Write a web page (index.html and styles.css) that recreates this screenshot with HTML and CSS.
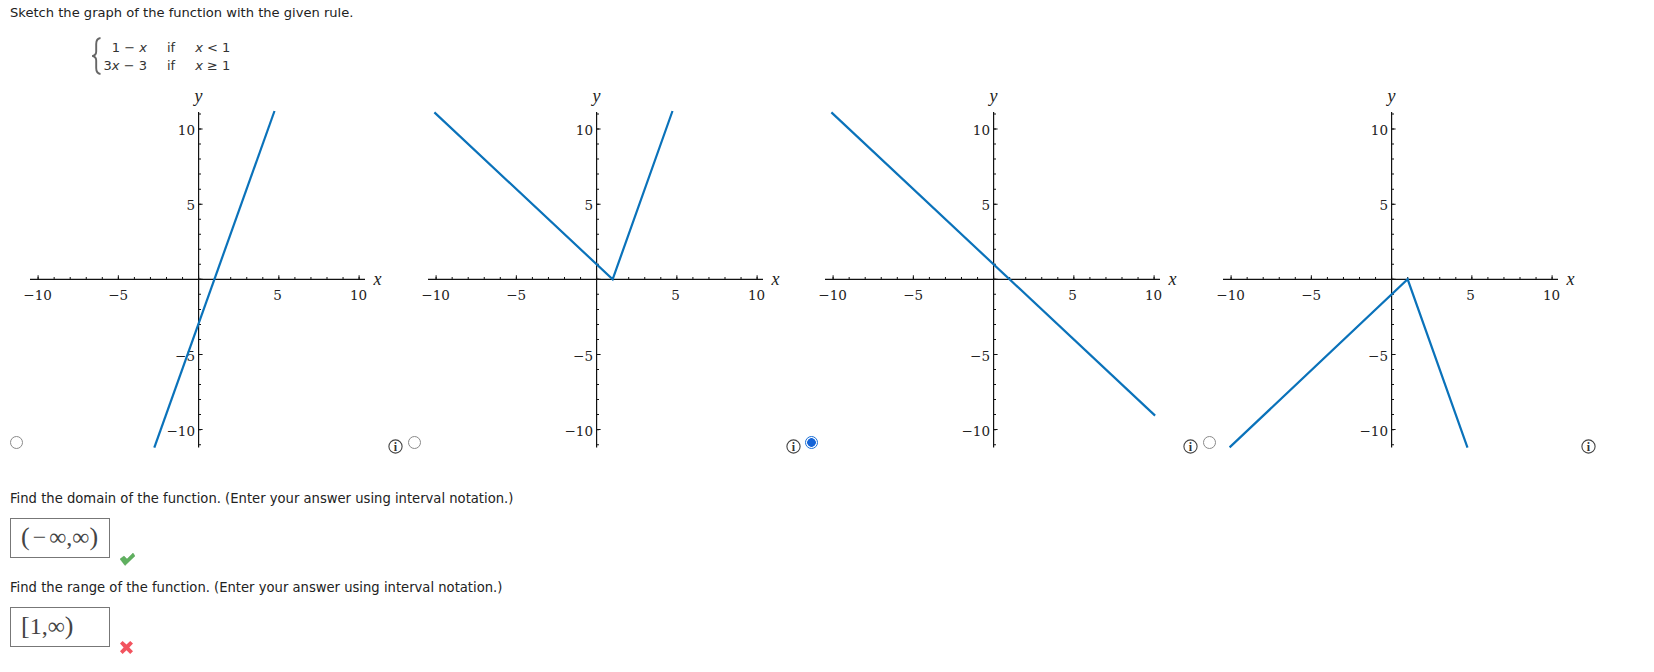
FILE: index.html
```html
<!DOCTYPE html>
<html lang="en">
<head>
<meta charset="utf-8">
<title>Sketch the graph</title>
<link rel="stylesheet" href="styles.css">
</head>
<body>
<main class="page">
  <p class="prompt">Sketch the graph of the function with the given rule.</p>
  <div class="rule">
    <svg class="brace" viewBox="0 0 9 38" aria-hidden="true"><path d="M8.500 1C4.800 1.400 4.200 3.500 4.200 7v7.500C4.200 17 3 18.400 .8 19 3 19.600 4.200 21 4.200 23.500V31c0 3.500.6 5.600 4.300 6"/></svg>
    <div class="cases">
      <span class="expr">1 − <i>x</i></span><span>if</span><span><i>x</i> &lt; 1</span>
      <span class="expr">3<i>x</i> − 3</span><span>if</span><span><i>x</i> ≥ 1</span>
    </div>
  </div>

  <div class="options">
    <div class="option">
      <input class="radio" type="radio" name="graph" aria-label="Graph 1">
      <svg class="graph" viewBox="0 0 363 360">
        <g transform="translate(175.6 189.3)">
          <line class="axis" x1="-168.6" y1="0" x2="166.4" y2="0"/><line class="axis" x1="0" y1="-167.3" x2="0" y2="168.3"/>
          <line class="minor-x" x1="-161" y1="-1.2" x2="161" y2="-1.2"/><line class="major-x" x1="-161" y1="-2" x2="161" y2="-2"/>
          <line class="minor-y" x1="1.2" y1="-165.8" x2="1.2" y2="166"/><line class="major-y" x1="2" y1="-150.8" x2="2" y2="151"/>
          <text class="num" x="-161" y="21" text-anchor="middle">−10</text><text class="num" x="-80.5" y="21" text-anchor="middle">−5</text><text class="num" x="79" y="21" text-anchor="middle">5</text><text class="num" x="160" y="21" text-anchor="middle">10</text>
          <text class="num" x="-3.6" y="-144" text-anchor="end">10</text><text class="num" x="-3.6" y="-69" text-anchor="end">5</text><text class="num" x="-3.6" y="81.500" text-anchor="end">−5</text><text class="num" x="-3.6" y="156.500" text-anchor="end">−10</text>
          <text class="var" x="179" y="6" text-anchor="middle">x</text><text class="var" x="0" y="-177" text-anchor="middle">y</text>
          <polyline class="curve" points="-44.300,168.300 75.900,-168.300"/>
        </g>
      </svg>
      <svg class="info" viewBox="0 0 15 15" aria-label="More information"><circle cx="7.500" cy="7.500" r="6.600"/><text x="7.500" y="11.500" text-anchor="middle">i</text></svg>
    </div>
    <div class="option">
      <input class="radio" type="radio" name="graph" aria-label="Graph 2">
      <svg class="graph" viewBox="0 0 363 360">
        <g transform="translate(175.6 189.3)">
          <line class="axis" x1="-168.6" y1="0" x2="166.4" y2="0"/><line class="axis" x1="0" y1="-167.3" x2="0" y2="168.3"/>
          <line class="minor-x" x1="-161" y1="-1.2" x2="161" y2="-1.2"/><line class="major-x" x1="-161" y1="-2" x2="161" y2="-2"/>
          <line class="minor-y" x1="1.2" y1="-165.8" x2="1.2" y2="166"/><line class="major-y" x1="2" y1="-150.8" x2="2" y2="151"/>
          <text class="num" x="-161" y="21" text-anchor="middle">−10</text><text class="num" x="-80.5" y="21" text-anchor="middle">−5</text><text class="num" x="79" y="21" text-anchor="middle">5</text><text class="num" x="160" y="21" text-anchor="middle">10</text>
          <text class="num" x="-3.6" y="-144" text-anchor="end">10</text><text class="num" x="-3.6" y="-69" text-anchor="end">5</text><text class="num" x="-3.6" y="81.500" text-anchor="end">−5</text><text class="num" x="-3.6" y="156.500" text-anchor="end">−10</text>
          <text class="var" x="179" y="6" text-anchor="middle">x</text><text class="var" x="0" y="-177" text-anchor="middle">y</text>
          <polyline class="curve" points="-162.200,-166.900 16.050,0 75.900,-168.300"/>
        </g>
      </svg>
      <svg class="info" viewBox="0 0 15 15" aria-label="More information"><circle cx="7.500" cy="7.500" r="6.600"/><text x="7.500" y="11.500" text-anchor="middle">i</text></svg>
    </div>
    <div class="option">
      <input class="radio" type="radio" name="graph" checked aria-label="Graph 3">
      <svg class="graph" viewBox="0 0 363 360">
        <g transform="translate(175.6 189.3)">
          <line class="axis" x1="-168.6" y1="0" x2="166.4" y2="0"/><line class="axis" x1="0" y1="-167.3" x2="0" y2="168.3"/>
          <line class="minor-x" x1="-161" y1="-1.2" x2="161" y2="-1.2"/><line class="major-x" x1="-161" y1="-2" x2="161" y2="-2"/>
          <line class="minor-y" x1="1.2" y1="-165.8" x2="1.2" y2="166"/><line class="major-y" x1="2" y1="-150.8" x2="2" y2="151"/>
          <text class="num" x="-161" y="21" text-anchor="middle">−10</text><text class="num" x="-80.5" y="21" text-anchor="middle">−5</text><text class="num" x="79" y="21" text-anchor="middle">5</text><text class="num" x="160" y="21" text-anchor="middle">10</text>
          <text class="num" x="-3.6" y="-144" text-anchor="end">10</text><text class="num" x="-3.6" y="-69" text-anchor="end">5</text><text class="num" x="-3.6" y="81.500" text-anchor="end">−5</text><text class="num" x="-3.6" y="156.500" text-anchor="end">−10</text>
          <text class="var" x="179" y="6" text-anchor="middle">x</text><text class="var" x="0" y="-177" text-anchor="middle">y</text>
          <polyline class="curve" points="-162.200,-166.900 161.500,136.300"/>
        </g>
      </svg>
      <svg class="info" viewBox="0 0 15 15" aria-label="More information"><circle cx="7.500" cy="7.500" r="6.600"/><text x="7.500" y="11.500" text-anchor="middle">i</text></svg>
    </div>
    <div class="option">
      <input class="radio" type="radio" name="graph" aria-label="Graph 4">
      <svg class="graph" viewBox="0 0 363 360">
        <g transform="translate(175.6 189.3)">
          <line class="axis" x1="-168.6" y1="0" x2="166.4" y2="0"/><line class="axis" x1="0" y1="-167.3" x2="0" y2="168.3"/>
          <line class="minor-x" x1="-161" y1="-1.2" x2="161" y2="-1.2"/><line class="major-x" x1="-161" y1="-2" x2="161" y2="-2"/>
          <line class="minor-y" x1="1.2" y1="-165.8" x2="1.2" y2="166"/><line class="major-y" x1="2" y1="-150.8" x2="2" y2="151"/>
          <text class="num" x="-161" y="21" text-anchor="middle">−10</text><text class="num" x="-80.5" y="21" text-anchor="middle">−5</text><text class="num" x="79" y="21" text-anchor="middle">5</text><text class="num" x="160" y="21" text-anchor="middle">10</text>
          <text class="num" x="-3.6" y="-144" text-anchor="end">10</text><text class="num" x="-3.6" y="-69" text-anchor="end">5</text><text class="num" x="-3.6" y="81.500" text-anchor="end">−5</text><text class="num" x="-3.6" y="156.500" text-anchor="end">−10</text>
          <text class="var" x="179" y="6" text-anchor="middle">x</text><text class="var" x="0" y="-177" text-anchor="middle">y</text>
          <polyline class="curve" points="-162,168.100 16.050,0 75.900,168.300"/>
        </g>
      </svg>
      <svg class="info" viewBox="0 0 15 15" aria-label="More information"><circle cx="7.500" cy="7.500" r="6.600"/><text x="7.500" y="11.500" text-anchor="middle">i</text></svg>
    </div>
  </div>

  <p class="question">Find the domain of the function. (Enter your answer using interval notation.)</p>
  <div class="answer-row">
    <div class="answer"><span class="paren">(</span><span class="op">−</span>∞,∞<span class="paren">)</span></div>
    <svg class="mark mark-ok" viewBox="0 0 15 14" aria-label="Correct"><path d="M0 7l4-3 3 3 6-6 2 3-10 9.500z"/></svg>
  </div>
  <p class="question">Find the range of the function. (Enter your answer using interval notation.)</p>
  <div class="answer-row">
    <div class="answer"><span class="paren">[</span>1,∞<span class="paren">)</span></div>
    <svg class="mark mark-bad" viewBox="0 0 13 13" aria-label="Incorrect"><path d="M2.600 0 6.500 3.400 10.200 0 13 2.600 9.300 6.500 13 10.200 10.200 13 6.500 9.300 2.600 13 0 10.200 3.600 6.500 0 2.600z"/></svg>
  </div>
</main>
</body>
</html>
```

FILE: styles.css
```css
* { box-sizing: border-box; }
html, body { margin: 0; background: #fff; }
.page {
  min-height: 672px;
  padding-top: 5px;
  font-family: "DejaVu Sans", Verdana, sans-serif;
  font-size: 13px;
  line-height: 16px;
  color: #222;
}
.prompt { margin: 0 0 18px 10px; font-size: 13.08px; }
.rule { display: flex; margin-left: 91.5px; height: 36px; font-size: 13px; color: #333; }
.brace { width: 9px; height: 38px; flex: none; margin-top: -2px; }
.brace path { fill: none; stroke: #666; stroke-width: 1.9; }
.cases {
  display: grid;
  grid-template-columns: 46.5px auto auto;
  column-gap: 20px;
  grid-auto-rows: 18px;
  line-height: 18px;
}
.expr { text-align: right; }
.options {
  display: grid;
  grid-template-columns: repeat(4, 397.67px);
  margin: 15px 0 0 10px;
}
.option { display: flex; align-items: flex-end; height: 364px; }
.radio {
  appearance: none;
  flex: none;
  width: 13px;
  height: 13px;
  margin: 0 0 5.5px;
  border: 1.3px solid #8a8a8a;
  border-radius: 50%;
  background: #fff;
}
.radio:checked {
  border: 1.5px solid #1a6fd6;
  background: radial-gradient(circle, #1464d8 0 4px, #fff 4.6px);
}
.graph { flex: none; width: 363px; height: 360px; margin-bottom: 4px; overflow: visible; }
.axis { stroke: #111; stroke-width: 1.2; }
.minor-x { stroke: #111; stroke-width: 2.4; stroke-dasharray: 1 15.05; }
.major-x { stroke: #111; stroke-width: 4; stroke-dasharray: 1 79.25; }
.minor-y { stroke: #111; stroke-width: 2.4; stroke-dasharray: 1 14.03; }
.major-y { stroke: #111; stroke-width: 4; stroke-dasharray: 1 74.15; }
.num { font-family: "DejaVu Serif", serif; font-size: 13.5px; fill: #222; }
.var { font-family: "Liberation Serif", serif; font-style: italic; font-size: 18px; fill: #222; }
.curve { fill: none; stroke: #0a72ba; stroke-width: 2.2; }
.info { flex: none; width: 15px; height: 15px; margin-left: 2px; }
.info circle { fill: #fff; stroke: #444; stroke-width: 1.1; }
.info text { font-family: "Liberation Serif", serif; font-weight: 700; font-size: 12px; fill: #333; }
.question { margin: 37px 0 0 10px; font-size: 13.16px; }
.answer-row + .question { margin-top: 14px; }
.answer-row { display: flex; align-items: flex-end; margin: 11px 0 0 10px; padding-bottom: 7.5px; }
.answer {
  width: 100px;
  height: 40px;
  padding-left: 10px;
  border: 1.3px solid #777;
  font-family: "Liberation Serif", serif;
  font-size: 24px;
  line-height: 36px;
  color: #444;
}
.paren { font-size: 26px; }
.op { margin: 0 3px; }
.mark { flex: none; margin: 0 0 -7.5px 10px; }
.mark-ok { width: 15px; height: 14px; }
.mark-ok path { fill: #5fb05f; stroke: #4a9a4a; stroke-width: .4; }
.mark-bad { width: 13px; height: 13px; }
.mark-bad path { fill: #f2545f; }
```
